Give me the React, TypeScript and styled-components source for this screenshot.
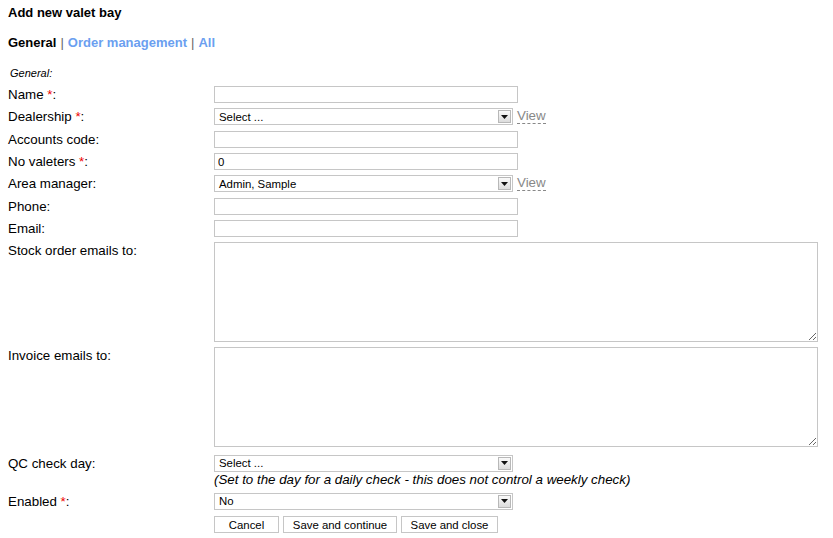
import React from "react"
import styled, { createGlobalStyle } from "styled-components"

const GlobalStyle = createGlobalStyle`
  body {
    margin: 0;
    background: #fff;
    font-family: "Liberation Sans", Arial, sans-serif;
    color: #000;
  }
`

type TField = {
  label: string
  required?: boolean
  kind: "text" | "select" | "textarea"
  value?: string
  view?: boolean
}

const fields: TField[] = [
  { label: "Name", required: true, kind: "text" },
  { label: "Dealership", required: true, kind: "select", value: "Select ...", view: true },
  { label: "Accounts code", kind: "text" },
  { label: "No valeters", required: true, kind: "text", value: "0" },
  { label: "Area manager", kind: "select", value: "Admin, Sample", view: true },
  { label: "Phone", kind: "text" },
  { label: "Email", kind: "text" },
  { label: "Stock order emails to", kind: "textarea" },
  { label: "Invoice emails to", kind: "textarea" },
]

const Arrow = () => (
  <ArrowBox>
    <svg width="7" height="4" viewBox="0 0 7 4">
      <path d="M0 0h7L3.5 4z" fill="#111" />
    </svg>
  </ArrowBox>
)

const FakeSelect: React.FC<{ value: string }> = ({ value }) => (
  <SelectBox>
    <span>{value}</span>
    <Arrow />
  </SelectBox>
)

const Label: React.FC<{ text: string; required?: boolean; offset?: number }> = ({ text, required, offset }) => (
  <LabelCell $offset={offset}>
    {text}
    {required && <Star> *</Star>}:
  </LabelCell>
)

const App: React.FC = () => {
  return (
    <Page>
      <GlobalStyle />
      <Title>Add new valet bay</Title>
      <Tabs>
        <span>General</span>
        <Sep>|</Sep>
        <TabLink>Order management</TabLink>
        <Sep>|</Sep>
        <TabLink>All</TabLink>
      </Tabs>
      <Section>General</Section>:
      <Form>
        {fields.map((f) => (
          <React.Fragment key={f.label}>
            <Label text={f.label} required={f.required} />
            <FieldCell>
              {f.kind === "text" && <TextInput defaultValue={f.value ?? ""} />}
              {f.kind === "select" && <FakeSelect value={f.value ?? ""} />}
              {f.kind === "textarea" && <TextArea />}
              {f.view && <ViewLink>View</ViewLink>}
            </FieldCell>
          </React.Fragment>
        ))}
        <Label text="QC check day" offset={2.5} />
        <FieldCell $column $offset={2.5}>
          <FakeSelect value="Select ..." />
          <Hint>(Set to the day for a daily check - this does not control a weekly check)</Hint>
        </FieldCell>
        <Label text="Enabled" required />
        <FieldCell>
          <FakeSelect value="No" />
        </FieldCell>
        <span />
        <Buttons>
          <Button $width={65}>Cancel</Button>
          <Button $width={114}>Save and continue</Button>
          <Button $width={97}>Save and close</Button>
        </Buttons>
      </Form>
    </Page>
  )
}

export default App

const Page = styled.div`
  padding: 5px 8px 0 8px;
  font-size: 11px;
  font-style: italic;
`

const Title = styled.div`
  font-size: 13px;
  font-weight: 700;
  font-style: normal;
  line-height: 15px;
`

const Tabs = styled.div`
  margin-top: 15px;
  font-size: 13px;
  font-weight: 700;
  font-style: normal;
  line-height: 15px;
  display: flex;
  gap: 4px;
`

const Sep = styled.span`
  font-weight: 400;
  color: #666;
`

const TabLink = styled.span`
  color: #6b9ff0;
`

const Section = styled.span`
  display: inline-block;
  margin-top: 17px;
  margin-left: 2px;
  font-size: 11px;
  font-style: italic;
  line-height: 13px;
`

const Form = styled.div`
  display: grid;
  grid-template-columns: 206px 1fr;
  row-gap: 5px;
  margin-top: 6px;
  font-style: normal;
`

const LabelCell = styled.div<{ $offset?: number }>`
  font-size: 13.33px;
  line-height: 15px;
  padding-top: 1px;
  margin-top: ${({ $offset }) => $offset ?? 0}px;
`

const Star = styled.span`
  color: #e00;
`

const FieldCell = styled.div<{ $column?: boolean; $offset?: number }>`
  display: flex;
  min-height: 17.33px;
  flex-direction: ${({ $column }) => ($column ? "column" : "row")};
  align-items: ${({ $column }) => ($column ? "flex-start" : "center")};
  gap: ${({ $column }) => ($column ? "0" : "4px")};
  margin-top: ${({ $offset }) => $offset ?? 0}px;
`

const TextInput = styled.input`
  box-sizing: border-box;
  width: 304px;
  height: 17px;
  border: 1px solid #c6c6c6;
  padding: 0 3px;
  font-family: "Liberation Sans", Arial, sans-serif;
  font-size: 11.4px;
  color: #000;
  outline: none;
`

const TextArea = styled.textarea`
  box-sizing: border-box;
  width: 604px;
  height: 100px;
  border: 1px solid #c6c6c6;
  padding: 2px 3px;
  font-family: "Liberation Sans", Arial, sans-serif;
  font-size: 11.4px;
  outline: none;
  resize: both;
  display: block;
`

const SelectBox = styled.div`
  box-sizing: border-box;
  width: 299px;
  height: 17px;
  border: 1px solid #c6c6c6;
  display: flex;
  align-items: center;
  justify-content: space-between;
  padding: 0 1px 0 4px;
  font-size: 11.4px;
  background: #fff;
`

const ArrowBox = styled.span`
  box-sizing: border-box;
  width: 13px;
  height: 13px;
  border: 1px solid #b8b8b8;
  background: linear-gradient(#fafafa, #dcdcdc);
  display: flex;
  align-items: center;
  justify-content: center;
`

const ViewLink = styled.span`
  font-size: 13.33px;
  color: #888;
  line-height: 14px;
  border-bottom: 1px dashed #888;
`

const Hint = styled.div`
  font-size: 13.33px;
  font-style: italic;
  line-height: 16px;
`

const Buttons = styled.div`
  display: flex;
  gap: 4px;
  margin-top: 1px;
`

const Button = styled.button<{ $width: number }>`
  box-sizing: border-box;
  width: ${({ $width }) => $width}px;
  height: 17px;
  padding: 0;
  border: 1px solid #c6c6c6;
  background: #fff;
  font-family: "Liberation Sans", Arial, sans-serif;
  font-size: 11.4px;
  color: #000;
`
